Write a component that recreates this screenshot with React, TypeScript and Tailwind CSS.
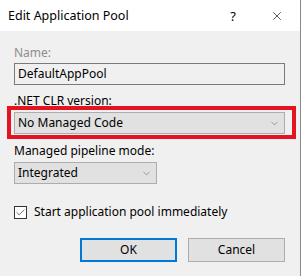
import { Check, ChevronDown, X } from 'lucide-react'

const font = { fontFamily: '"Noto Sans", "Open Sans", sans-serif' }

// Windows-style combobox
const Combo = ({ value, className }: { value: string; className: string }) => (
  <div
    className={`flex h-[22px] items-center justify-between border border-[#adadad] bg-[#e1e1e1] pl-[3px] pr-[4px] text-[12px] text-black ${className}`}
  >
    <span>{value}</span>
    <ChevronDown size={11} strokeWidth={1.1} className="text-[#555555]" />
  </div>
)

export default function App() {
  return (
    <div className="flex h-[276px] w-[303px] bg-white text-[12px] leading-[16px]" style={font}>
      <div className="flex w-[301px] flex-col border-r border-[#8a8a8a]">
        {/* Title bar */}
        <div className="flex h-[31px] items-center bg-white pl-[8px]">
          <span className="flex-1 text-[12.5px] text-black">Edit Application Pool</span>
          <span className="mr-[34px] text-[13px] text-black">?</span>
          <X size={14} strokeWidth={1.1} className="mr-[16px] text-black" />
        </div>

        {/* Body */}
        <div className="flex flex-1 flex-col bg-[#f0f0f0] pl-[14px] pr-[15px]">
          <div className="mt-[14px] text-[#8d8d8d]">Name:</div>
          <div className="mt-[2px] flex h-[22px] items-center border border-[#7a7a7a] bg-[#f0f0f0] pl-[3px] text-black">
            DefaultAppPool
          </div>

          <div className="mt-[8px] text-black">.NET CLR version:</div>
          <div className="-mr-[11px] -ml-[7px] -mt-[3px] border-4 border-[#e5121f] pb-[1px] pl-[3px] pr-[7px] pt-[2px]">
            <Combo value="No Managed Code" className="w-full" />
          </div>

          <div className="mt-[4px] text-black">Managed pipeline mode:</div>
          <Combo value="Integrated" className="mt-[3px] w-[143px]" />

          <label className="mt-[20px] flex items-center gap-[7px] text-black">
            <span className="flex h-[13px] w-[13px] items-center justify-center border border-[#333333] bg-white">
              <Check size={11} strokeWidth={1.6} className="text-[#333333]" />
            </span>
            Start application pool immediately
          </label>

          <div className="mt-[18px] flex justify-end gap-[11px]">
            <button className="h-[24px] w-[97px] border-2 border-[#0078d7] bg-[#e1e1e1] text-black">
              OK
            </button>
            <button className="h-[24px] w-[97px] border border-[#adadad] bg-[#e1e1e1] text-black">
              Cancel
            </button>
          </div>
        </div>
      </div>
    </div>
  )
}
